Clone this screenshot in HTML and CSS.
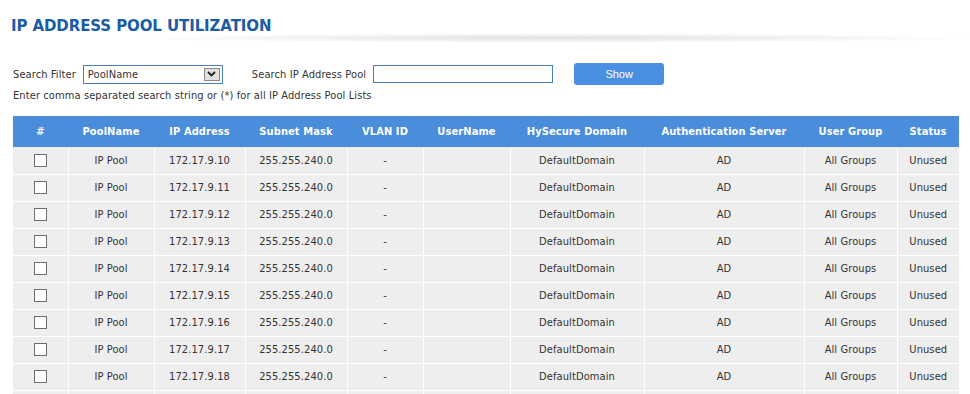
FILE: index.html
```html
<!DOCTYPE html>
<html>
<head>
<meta charset="utf-8">
<link rel="stylesheet" href="styles.css">
</head>
<body>
<div class="page">
  <div class="title-wrap">
    <h1 class="title">IP ADDRESS POOL UTILIZATION</h1>
    <div class="title-shadow"></div>
  </div>
  <div class="search-row">
    <span class="label">Search Filter</span>
    <div class="select">
      <span class="select-text">PoolName</span>
      <span class="select-btn"><svg width="9" height="6" viewBox="0 0 9 6"><path d="M1 1 L4.5 4.5 L8 1" fill="none" stroke="#222" stroke-width="1.8"/></svg></span>
    </div>
    <span class="label label-pool">Search IP Address Pool</span>
    <div class="text-input"></div>
    <button class="show-btn">Show</button>
  </div>
  <div class="help">Enter comma separated search string or (*) for all IP Address Pool Lists</div>
  <table class="grid">
    <colgroup>
      <col class="c1"><col class="c2"><col class="c3"><col class="c4"><col class="c5">
      <col class="c6"><col class="c7"><col class="c8"><col class="c9"><col class="c10">
    </colgroup>
    <thead>
      <tr><th>#</th><th>PoolName</th><th>IP Address</th><th>Subnet Mask</th><th>VLAN ID</th><th>UserName</th><th>HySecure Domain</th><th>Authentication Server</th><th>User Group</th><th>Status</th></tr>
    </thead>
    <tbody>
      <tr><td><span class="cb"></span></td><td>IP Pool</td><td>172.17.9.10</td><td>255.255.240.0</td><td>-</td><td></td><td>DefaultDomain</td><td>AD</td><td>All Groups</td><td>Unused</td></tr>
      <tr><td><span class="cb"></span></td><td>IP Pool</td><td>172.17.9.11</td><td>255.255.240.0</td><td>-</td><td></td><td>DefaultDomain</td><td>AD</td><td>All Groups</td><td>Unused</td></tr>
      <tr><td><span class="cb"></span></td><td>IP Pool</td><td>172.17.9.12</td><td>255.255.240.0</td><td>-</td><td></td><td>DefaultDomain</td><td>AD</td><td>All Groups</td><td>Unused</td></tr>
      <tr><td><span class="cb"></span></td><td>IP Pool</td><td>172.17.9.13</td><td>255.255.240.0</td><td>-</td><td></td><td>DefaultDomain</td><td>AD</td><td>All Groups</td><td>Unused</td></tr>
      <tr><td><span class="cb"></span></td><td>IP Pool</td><td>172.17.9.14</td><td>255.255.240.0</td><td>-</td><td></td><td>DefaultDomain</td><td>AD</td><td>All Groups</td><td>Unused</td></tr>
      <tr><td><span class="cb"></span></td><td>IP Pool</td><td>172.17.9.15</td><td>255.255.240.0</td><td>-</td><td></td><td>DefaultDomain</td><td>AD</td><td>All Groups</td><td>Unused</td></tr>
      <tr><td><span class="cb"></span></td><td>IP Pool</td><td>172.17.9.16</td><td>255.255.240.0</td><td>-</td><td></td><td>DefaultDomain</td><td>AD</td><td>All Groups</td><td>Unused</td></tr>
      <tr><td><span class="cb"></span></td><td>IP Pool</td><td>172.17.9.17</td><td>255.255.240.0</td><td>-</td><td></td><td>DefaultDomain</td><td>AD</td><td>All Groups</td><td>Unused</td></tr>
      <tr><td><span class="cb"></span></td><td>IP Pool</td><td>172.17.9.18</td><td>255.255.240.0</td><td>-</td><td></td><td>DefaultDomain</td><td>AD</td><td>All Groups</td><td>Unused</td></tr>
      <tr class="partial"><td></td><td></td><td></td><td></td><td></td><td></td><td></td><td></td><td></td><td></td></tr>
    </tbody>
  </table>
</div>
</body>
</html>
```

FILE: styles.css
```css
* { box-sizing: border-box; }
html, body { margin: 0; padding: 0; background: #fff; overflow: hidden; }
body {
  font-family: "DejaVu Sans Condensed", "DejaVu Sans", Verdana, sans-serif;
  font-stretch: semi-condensed;
  font-size: 11px;
  letter-spacing: 0.1px;
  color: #333;
}
.page { padding: 0 11px 0 13px; }
.title-wrap { position: relative; height: 44px; }
.title {
  margin: 0;
  padding-top: 17px;
  margin-left: -2px;
  font-family: "DejaVu Sans", Verdana, sans-serif;
  font-stretch: normal;
  font-size: 15px;
  font-weight: bold;
  letter-spacing: -0.1px;
  color: #1b5ca6;
  line-height: 18px;
}
.title-shadow {
  position: absolute;
  left: 120px;
  right: -20px;
  top: 33px;
  height: 10px;
  background: radial-gradient(ellipse 50% 50% at 50% 50%, rgba(0,0,0,0.12), rgba(0,0,0,0) 100%);
}
.search-row {
  display: flex;
  align-items: center;
  margin-top: 19px;
  height: 22px;
}
.label { white-space: nowrap; }
.select {
  margin-left: 7px;
  width: 140px;
  height: 19px;
  border: 1px solid #4a7fbf;
  display: flex;
  align-items: center;
  justify-content: space-between;
  padding: 0 2px 0 4px;
  background: #fff;
}
.select-btn {
  width: 16px;
  height: 13px;
  background: #e1e1e1;
  border: 1px solid #8a8a8a;
  display: flex;
  align-items: center;
  justify-content: center;
}
.label-pool { margin-left: 29px; }
.text-input {
  margin-left: 7px;
  width: 180px;
  height: 18px;
  border: 1px solid #4a7fbf;
  background: #fff;
}
.show-btn {
  margin-left: 21px;
  width: 90px;
  height: 22px;
  border: none;
  border-radius: 3px;
  background: #4a90e2;
  color: #fff;
  font-family: "Liberation Sans", Arial, sans-serif;
  font-stretch: normal;
  font-size: 11px;
  letter-spacing: 0;
  padding: 0;
}
.help { margin-top: 4px; line-height: 14px; }
.grid {
  margin-top: 13px;
  width: 946px;
  border-collapse: collapse;
  table-layout: fixed;
}
.c1 { width: 55px; }
.c2 { width: 86px; }
.c3 { width: 91px; }
.c4 { width: 102px; }
.c5 { width: 76px; }
.c6 { width: 87px; }
.c7 { width: 134px; }
.c8 { width: 160px; }
.c9 { width: 93px; }
.c10 { width: 62px; }
.grid th {
  background: #4a8ddb;
  color: #fff;
  font-weight: bold;
  height: 31px;
  text-align: center;
  padding: 0;
  white-space: nowrap;
}
.grid td {
  background: #eeeeee;
  height: 27px;
  text-align: center;
  padding: 0;
  border-left: 1px solid #fff;
  border-bottom: 1px solid #fff;
  white-space: nowrap;
  color: #333;
}
.grid td:first-child { border-left: none; }
.cb {
  display: inline-block;
  width: 13px;
  height: 13px;
  border: 1px solid #6d6d6d;
  background: #fff;
  vertical-align: middle;
}
```
